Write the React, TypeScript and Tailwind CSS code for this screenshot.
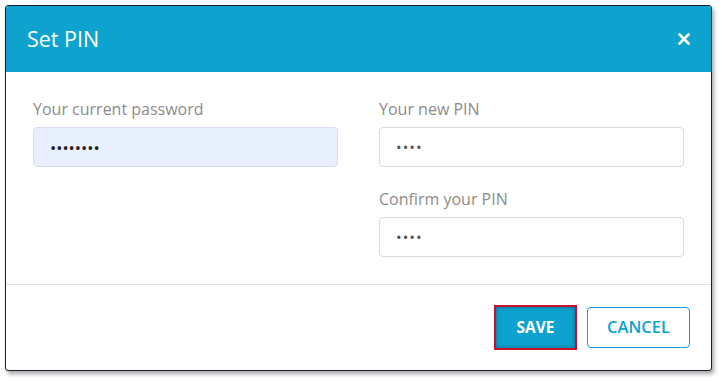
import React from "react";

const font = { fontFamily: '"Open Sans", "Noto Sans", sans-serif' };

function Field({ label, value, filled }: { label: string; value: string; filled?: boolean }) {
  return (
    <div className="flex flex-col">
      <label className="mb-[8px] h-[20px] text-[16px] leading-[20px] text-[#8c8c8c]">{label}</label>
      <input
        type="password"
        readOnly
        value={value}
        className={
          filled
            ? "h-[40px] w-full rounded-[4px] border border-[#d5deec] bg-[#e8f0fe] px-[16px] text-[16.5px] text-[#222] outline-none"
            : "h-[40px] w-full rounded-[4px] border border-[#dadada] bg-white px-[16px] text-[15px] tracking-[1px] text-[#555] outline-none"
        }
      />
    </div>
  );
}

export default function App() {
  return (
    <div className="h-[381px] w-[722px] bg-white" style={font}>
      <div className="ml-[5px] pt-[5px]">
        <div className="flex h-[366px] w-[707px] flex-col overflow-hidden rounded-[3px] border border-[#1b2030] bg-white shadow-[2px_3px_4px_rgba(0,0,0,0.35)]">
          <div className="flex h-[66px] shrink-0 items-center justify-between bg-[#0ea2cf] pl-[21px] pr-[20px]">
            <h1 className="text-[21.5px] leading-none text-white">Set PIN</h1>
            <button className="flex h-[14px] w-[14px] items-center justify-center text-white">
              <svg width="12" height="12" viewBox="0 0 12 12">
                <path d="M1.5 1.5 L10.5 10.5 M10.5 1.5 L1.5 10.5" stroke="white" strokeWidth="2.6" strokeLinecap="square" />
              </svg>
            </button>
          </div>

          <div className="grid grid-cols-2 gap-x-[41px] border-b border-[#e2e2e2] px-[27px] pb-[27px] pt-[27px]">
            <div>
              <Field label="Your current password" value="password" filled />
            </div>
            <div className="flex flex-col gap-[22px]">
              <Field label="Your new PIN" value="1234" />
              <Field label="Confirm your PIN" value="1234" />
            </div>
          </div>

          <div className="flex flex-1 items-center justify-end gap-[12px] pr-[21px]">
            <button className="h-[41px] w-[79px] bg-[#0ea2cf] text-[15.5px] font-bold text-white shadow-[inset_0_0_4px_rgba(0,0,0,0.35)] outline outline-[2px] outline-[#c8102e]">
              SAVE
            </button>
            <button className="h-[41px] w-[103px] rounded-[4px] border border-[#0ea2cf] bg-white text-[16.5px] font-semibold text-[#0ea2cf]">
              CANCEL
            </button>
          </div>
        </div>
      </div>
    </div>
  );
}
